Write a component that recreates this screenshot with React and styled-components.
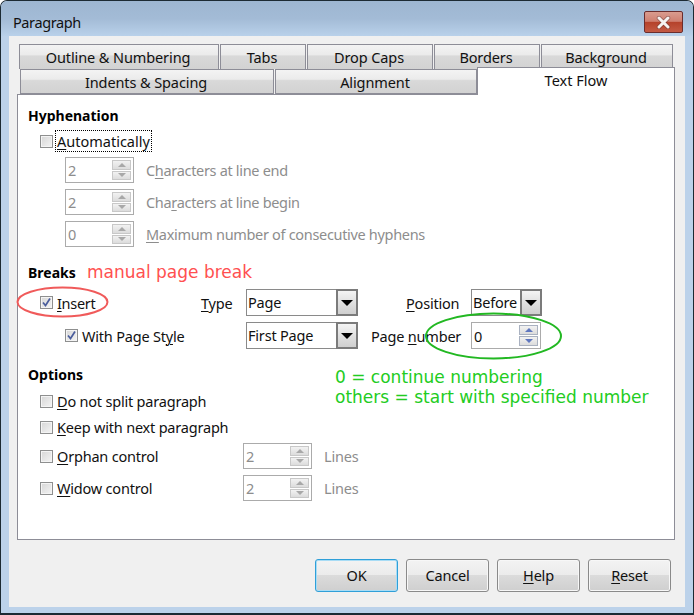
import React from "react";
import styled, { createGlobalStyle } from "styled-components";

const Global = createGlobalStyle`
  html, body { margin: 0; padding: 0; background: #fff; }
  body { width: 694px; height: 615px; overflow: hidden; font-family: "Noto Sans", "Open Sans", sans-serif; font-size: 14px; letter-spacing: -0.2px; color: #000; }
  * { box-sizing: border-box; }
`;

const Window = styled.div`
  position: relative;
  width: 694px; height: 615px;
  background: #bcd2ea;
  border: 1px solid #1c2a33;
  border-bottom-width: 2px;
  border-radius: 7px 7px 0 0;
  padding: 0 8px 6px 8px;
  display: flex; flex-direction: column;
`;
const TitleBar = styled.div`
  height: 35px;
  margin: 0 -8px;
  padding: 0 9px 0 12px;
  background: linear-gradient(#9db6d1, #a3bbd6 50%, #b9d1ea);
  border-radius: 6px 6px 0 0;
  display: flex; align-items: center; justify-content: space-between;
`;
const Title = styled.span`font-size: 14.5px; letter-spacing: -0.4px; color: #111; margin-top: 7px;`;
const CloseBtn = styled.div`
  width: 39px; height: 22px;
  margin-top: 7px;
  margin-right: 1px;
  border: 1px solid #6a2d2d;
  border-radius: 2px;
  background: linear-gradient(#d99c8f, #cf7f70 47%, #b5412a 50%, #c45a44);
  display: flex; align-items: center; justify-content: center;
`;
const Client = styled.div`
  flex: 1;
  background: #f0f0f0;
  padding: 8px 9px 0 8px;
  display: flex; flex-direction: column;
`;
const TabRow = styled.div`
  display: flex; height: 25px; padding-left: ${p => p.$pad}px; gap: 1px; align-items: flex-start;
  position: relative;
`;
const Tab = styled.div`
  width: ${p => p.$w}px; height: 25px;
  border: 1px solid #8d8d97;
  border-bottom-width: ${p => p.$low ? 1 : 0}px;
  background: linear-gradient(#f3f3f3, #ebebeb 40%, #d9d9d9 46%, #d2d2d2);
  display: flex; align-items: center; justify-content: center;
  font-size: 14.5px; letter-spacing: -0.1px; color: #111;
  padding-right: 2px;
`;
const ActiveTab = styled.div`
  width: 198px; height: 28px; margin-top: -2px; margin-left: -1px;
  background: #fff;
  border: 1px solid #8d8d97; border-bottom: 0;
  display: flex; align-items: center; justify-content: center;
  font-size: 14.5px; letter-spacing: 0; color: #111;
  padding-bottom: 3px;
  position: relative; z-index: 2;
`;
const Panel = styled.div`
  width: 658px; height: 446px;
  background: #fff;
  border: 1px solid #8d8d97;
  padding: 11px 10px 0 10px;
  display: flex; flex-direction: column; gap: 6px;
`;
const Heading = styled.div`
  height: 20px; line-height: 20px; font-weight: 700; font-size: 14px; letter-spacing: 0; color: #000;
  margin-bottom: ${p => p.$tight ? -1 : 0}px;
  margin-top: ${p => p.$first ? 0 : 10}px;
`;
const Row = styled.div`
  display: flex; align-items: center; height: ${p => p.$h || 20}px;
  padding-left: ${p => p.$indent || 0}px;
`;
const GridRow = styled.div`
  display: grid; align-items: center; height: 27px;
  grid-template-columns: ${p => p.$cols};
`;
const CheckWrap = styled.div`
  display: flex; align-items: center; gap: 4px;
  padding-left: ${p => p.$indent || 0}px;
  ${p => p.$w ? `width: ${p.$w}px; flex: none;` : ""}
`;
const Box = styled.span`
  width: 13px; height: 13px; flex: none;
  border: 1px solid #8e8f8f;
  background: linear-gradient(135deg, #d6d6d6, #f4f4f4);
  box-shadow: inset 0 0 0 1px #f4f4f4;
  display: flex; align-items: center; justify-content: center;
`;
const Label = styled.span`
  font-size: 14.5px; white-space: nowrap;
  letter-spacing: ${p => p.$tight ? -0.32 : -0.2}px;
  color: ${p => p.$off ? "#8d8d8d" : "#111"};
  margin-left: ${p => p.$left || 0}px;
  u { text-underline-offset: 2px; text-decoration-thickness: 1px; }
`;
const Focus = styled.span`
  outline: 1px dotted #000;
  outline-offset: 0;
  padding: 0 1px;
  height: 20px; line-height: 20px; width: 95px; margin-left: -1px;
  font-size: 14.5px; letter-spacing: 0; color: #111; white-space: nowrap;
  u { text-underline-offset: 2px; text-decoration-thickness: 1px; }
`;
const SpinBox = styled.div`
  width: ${p => p.$w || 69}px; height: ${p => p.$h || 26}px; flex: none;
  margin-left: ${p => p.$left || 0}px;
  border: 1px solid #ababab;
  background: #fff;
  padding: 2px 2px 2px 2px;
  display: flex; justify-content: space-between; align-items: center;
  font-size: 14.5px; color: ${p => p.$off ? "#8d8d8d" : "#111"};
`;
const SpinBtns = styled.div`display: flex; flex-direction: column; gap: 1px; width: 19px; height: 100%;`;
const SpinBtn = styled.div`
  flex: 1; border: 1px solid ${p => p.$off ? "#c8c8c8" : "#a9b1c0"};
  background: linear-gradient(#f2f2f2, #dcdcdc);
  display: flex; align-items: center; justify-content: center;
`;
const Arrow = styled.span`
  width: 0; height: 0;
  border-left: 4px solid transparent; border-right: 4px solid transparent;
  ${p => p.$up ? `border-bottom: 4px solid ${p.$c};` : `border-top: 4px solid ${p.$c};`}
`;
const Select = styled.div`
  height: 27px; width: ${p => p.$w}px;
  display: flex; align-items: stretch;
  border: 1px solid #8a8a8a;
  background: #fff;
`;
const SelectText = styled.span`flex: 1; padding-left: 1px; font-size: 14.5px; line-height: 25px; color: #111;`;
const SelectBtn = styled.span`
  width: 22px; flex: none;
  border: 2px solid #7b7b7b;
  margin: -1px -1px -1px 0;
  background: linear-gradient(#f4f4f4, #e2e2e2 45%, #cfcfcf);
  display: flex; align-items: center; justify-content: center;
`;
const DropArrow = styled.span`
  width: 0; height: 0;
  border-left: 6px solid transparent; border-right: 6px solid transparent;
  border-top: 6px solid #000;
`;
const Footer = styled.div`
  flex: 1; display: flex; justify-content: flex-end; gap: 8px;
  padding: 19px 5px 0 0;
`;
const Btn = styled.div`
  width: 83px; height: 33px;
  border: 1px solid ${p => p.$def ? "#2f9fd8" : "#8a8a8a"};
  box-shadow: ${p => p.$def ? "inset 0 0 0 1px #a8dcf5" : "inset 0 0 0 1px #f7f7f7"};
  border-radius: 3px;
  background: linear-gradient(#f3f3f3, #ebebeb 48%, #dbdbdb 50%, #cfcfcf);
  display: flex; align-items: center; justify-content: center;
  font-size: 14.5px; color: #111;
  padding-bottom: 1px;
  u { text-underline-offset: 2px; text-decoration-thickness: 1px; }
`;
const Note = styled.div`
  position: absolute; left: ${p => p.$x}px; top: ${p => p.$y}px;
  font-family: "DejaVu Sans", sans-serif; font-size: 17px; line-height: 20px;
  color: ${p => p.$c}; white-space: pre; letter-spacing: 0;
`;
const Overlay = styled.svg`
  position: absolute; left: -1px; top: -1px; width: 694px; height: 615px; pointer-events: none; z-index: 5;
`;

const Check = () => (
  <svg width="11" height="11" viewBox="0 0 11 11">
    <path d="M2 5.5 L4.5 8.5 L9 1.5" fill="none" stroke="#4a5d9c" strokeWidth="1.7" />
  </svg>
);
const CheckBox = ({ on }) => <Box>{on ? <Check /> : null}</Box>;

const Spin = ({ value, off, w, h, left }) => {
  const c = off ? "#a8a8a8" : "#5f77bf";
  return (
    <SpinBox $off={off} $w={w} $h={h} $left={left}>
      <span>{value}</span>
      <SpinBtns>
        <SpinBtn $off={off}><Arrow $up $c={c} /></SpinBtn>
        <SpinBtn $off={off}><Arrow $c={c} /></SpinBtn>
      </SpinBtns>
    </SpinBox>
  );
};
const Drop = ({ w, children }) => (
  <Select $w={w}>
    <SelectText>{children}</SelectText>
    <SelectBtn><DropArrow /></SelectBtn>
  </Select>
);

export default function App() {
  return (
    <>
      <Global />
      <Window>
        <TitleBar>
          <Title>Paragraph</Title>
          <CloseBtn>
            <svg width="15" height="13" viewBox="0 0 15 13">
              <path d="M3 2 L12 11 M12 2 L3 11" stroke="#5a3030" strokeWidth="4.4" strokeLinecap="round" opacity="0.55" />
              <path d="M3 2 L12 11 M12 2 L3 11" stroke="#f6f3f1" strokeWidth="3" strokeLinecap="round" />
            </svg>
          </CloseBtn>
        </TitleBar>
        <Client>
          <TabRow $pad={2}>
            <Tab $w={200}>Outline &amp; Numbering</Tab>
            <Tab $w={86}>Tabs</Tab>
            <Tab $w={126}>Drop Caps</Tab>
            <Tab $w={106}>Borders</Tab>
            <Tab $w={132}>Background</Tab>
          </TabRow>
          <TabRow $pad={3}>
            <Tab $w={254} $low>Indents &amp; Spacing</Tab>
            <Tab $w={202} $low>Alignment</Tab>
            <ActiveTab>Text Flow</ActiveTab>
          </TabRow>
          <Panel>
            <Heading $first $tight>Hyphenation</Heading>
            <Row>
              <CheckWrap $indent={12}>
                <CheckBox />
                <Focus><u>A</u>utomatically</Focus>
              </CheckWrap>
            </Row>
            <Row $h={26} $indent={37}>
              <Spin value="2" off />
              <Label $off $tight $left={12}>C<u>h</u>aracters at line end</Label>
            </Row>
            <Row $h={26} $indent={37}>
              <Spin value="2" off />
              <Label $off $tight $left={12}>Cha<u>r</u>acters at line begin</Label>
            </Row>
            <Row $h={26} $indent={37}>
              <Spin value="0" off />
              <Label $off $tight $left={12}><u>M</u>aximum number of consecutive hyphens</Label>
            </Row>
            <Heading>Breaks</Heading>
            <GridRow $cols="173px 45px 112px 48px 65px 71px">
              <CheckWrap $indent={12}><CheckBox on /><Label $tight><u>I</u>nsert</Label></CheckWrap>
              <Label><u>T</u>ype</Label>
              <Drop w={112}>Page</Drop>
              <span />
              <Label><u>P</u>osition</Label>
              <Drop w={71}>Before</Drop>
            </GridRow>
            <GridRow $cols="218px 112px 13px 100px 70px">
              <CheckWrap $indent={37}><CheckBox on /><Label>With Page St<u>y</u>le</Label></CheckWrap>
              <Drop w={112}>First Page</Drop>
              <span />
              <Label>Page <u>n</u>umber</Label>
              <Spin value="0" w={70} h={27} />
            </GridRow>
            <Heading>Options</Heading>
            <Row><CheckWrap $indent={12}><CheckBox /><Label><u>D</u>o not split paragraph</Label></CheckWrap></Row>
            <Row><CheckWrap $indent={12}><CheckBox /><Label><u>K</u>eep with next paragraph</Label></CheckWrap></Row>
            <Row $h={26}>
              <CheckWrap $indent={12} $w={215}><CheckBox /><Label><u>O</u>rphan control</Label></CheckWrap>
              <Spin value="2" off />
              <Label $off $left={12}>Lines</Label>
            </Row>
            <Row $h={26}>
              <CheckWrap $indent={12} $w={215}><CheckBox /><Label><u>W</u>idow control</Label></CheckWrap>
              <Spin value="2" off />
              <Label $off $left={12}>Lines</Label>
            </Row>
          </Panel>
          <Footer>
            <Btn $def>OK</Btn>
            <Btn>Cancel</Btn>
            <Btn><span><u>H</u>elp</span></Btn>
            <Btn><span><u>R</u>eset</span></Btn>
          </Footer>
        </Client>
        <Note $x={86} $y={261} $c="#ff5050">manual page break</Note>
        <Note $x={334} $y={366} $c="#22cc22">{"0 = continue numbering\nothers = start with specified number"}</Note>
        <Overlay viewBox="0 0 694 615">
          <ellipse cx="62.5" cy="302" rx="45" ry="14.5" fill="none" stroke="#f05a5a" strokeWidth="2" />
          <ellipse cx="493.5" cy="336" rx="67.5" ry="22.5" fill="none" stroke="#22b822" strokeWidth="2" />
        </Overlay>
      </Window>
    </>
  );
}
